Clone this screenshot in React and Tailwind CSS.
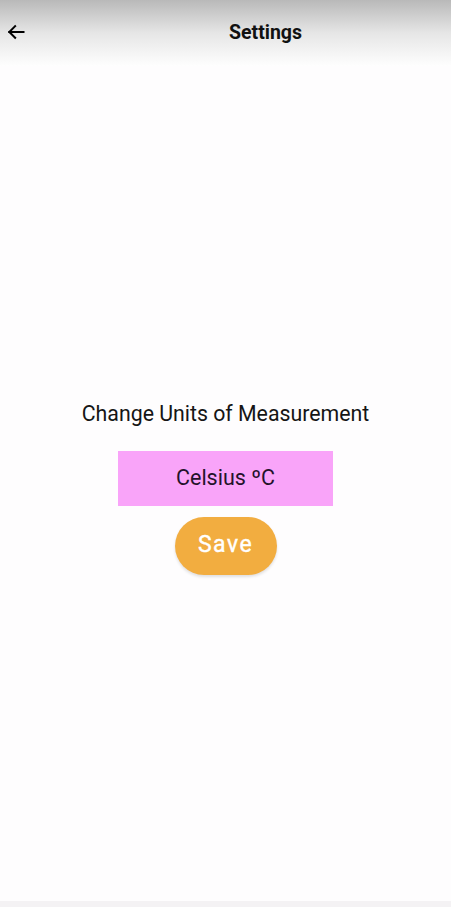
export default function App() {
  return (
    <div className="flex h-[907px] w-full flex-col bg-[#fefdfe] font-['Roboto',sans-serif]">
      <header className="flex h-[66px] shrink-0 items-start bg-gradient-to-b from-[#b9b9b9] via-[#e6e6e6] to-[#fefefe] pt-[22px]">
        <button className="ml-[6px] flex h-5 w-5 items-center justify-center text-black">
          <svg width="20" height="20" viewBox="0 0 24 24" fill="none" stroke="currentColor" strokeWidth="2.4" strokeLinecap="square">
            <path d="M21 12H4" />
            <path d="M11 5l-7 7 7 7" />
          </svg>
        </button>
        <h1 className="ml-[203px] text-[19.5px] leading-[22px] font-bold text-[#111]">Settings</h1>
      </header>

      <main className="flex flex-1 flex-col items-center justify-center pt-[10px]">
        <p className="text-[21.3px] leading-[24px] text-[#151515]">Change Units of Measurement</p>
        <div className="mt-[25px] flex h-[55px] w-[215px] items-center justify-center bg-[#f9a4f9]">
          <span className="text-[21.5px] text-[#24122a]">Celsius ºC</span>
        </div>
        <button className="mt-[11px] flex h-[58px] w-[102px] items-center justify-center rounded-full bg-[#f2ad40] pb-[1px] text-[23px] font-normal tracking-[1.5px] text-white shadow-[0_2px_3px_rgba(0,0,0,0.12)] [-webkit-text-stroke:0.4px_white]">
          Save
        </button>
      </main>

      <div className="h-[6px] shrink-0 bg-[#f4f2f4]" />
    </div>
  );
}
